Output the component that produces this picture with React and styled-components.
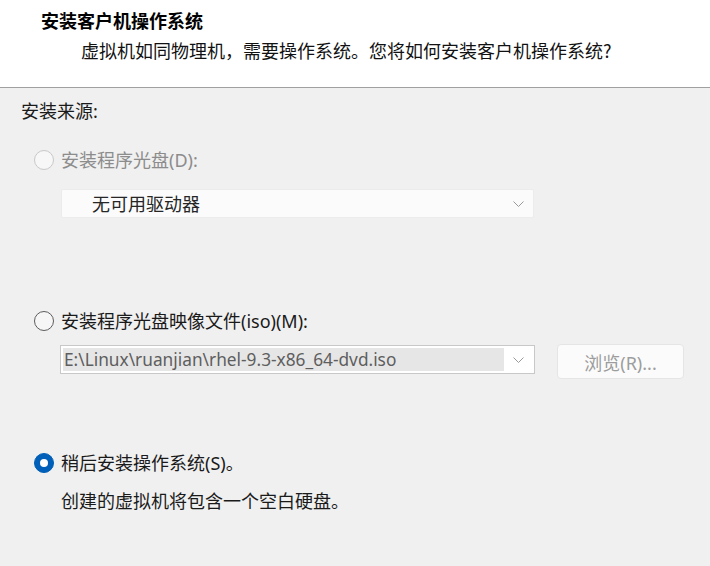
import React from "react";
import styled, { createGlobalStyle } from "styled-components";

const GlobalStyle = createGlobalStyle`
  html, body {
    margin: 0;
    padding: 0;
    background: #f0f0f0;
  }
  body {
    font-family: "Noto Sans", "Noto Sans CJK SC", sans-serif;
    font-size: 18px;
    color: #1a1a1a;
  }
`;

const Chevron = () => (
  <svg width="11" height="6" viewBox="0 0 11 6">
    <path d="M0.5 0.5 L5.5 5.5 L10.5 0.5" fill="none" stroke="#9a9a9a" strokeWidth="1" />
  </svg>
);

const App = () => {
  return (
    <>
      <GlobalStyle />
      <Window>
        <Header>
          <Title>安装客户机操作系统</Title>
          <Subtitle>虚拟机如同物理机，需要操作系统。您将如何安装客户机操作系统?</Subtitle>
        </Header>
        <Body>
          <SectionLabel>安装来源:</SectionLabel>

          <OptionRow $top={25}>
            <Radio $state="disabled" />
            <OptionLabel $disabled>安装程序光盘(D):</OptionLabel>
          </OptionRow>
          <Indent $top={17}>
            <DriveSelect>
              <DriveText>无可用驱动器</DriveText>
              <Chevron />
            </DriveSelect>
          </Indent>

          <OptionRow $top={91}>
            <Radio $state="off" />
            <OptionLabel>安装程序光盘映像文件(iso)(M):</OptionLabel>
          </OptionRow>
          <IsoRow>
            <IsoCombo>
              <IsoValue>E:\Linux\ruanjian\rhel-9.3-x86_64-dvd.iso</IsoValue>
              <ChevronSlot>
                <Chevron />
              </ChevronSlot>
            </IsoCombo>
            <BrowseButton disabled>浏览(R)...</BrowseButton>
          </IsoRow>

          <OptionRow $top={72}>
            <Radio $state="on" />
            <OptionLabel>稍后安装操作系统(S)。</OptionLabel>
          </OptionRow>
          <Description>创建的虚拟机将包含一个空白硬盘。</Description>
        </Body>
      </Window>
    </>
  );
};

const Window = styled.div`
  width: 710px;
  height: 566px;
  overflow: hidden;
  background: #f0f0f0;
`;

const Header = styled.div`
  background: #ffffff;
  height: 88px;
  box-sizing: border-box;
  padding: 8px 0 0 41px;
  border-bottom: 1px solid #a0a0a0;
`;

const Title = styled.div`
  font-family: "Noto Sans CJK SC", sans-serif;
  font-weight: 700;
  font-size: 18px;
  line-height: 24px;
  color: #000;
`;

const Subtitle = styled.div`
  font-family: "Noto Sans CJK SC", sans-serif;
  font-size: 18px;
  line-height: 24px;
  margin: 6px 0 0 40px;
  color: #111;
`;

const Body = styled.div`
  padding: 11px 0 0 21px;
  display: flex;
  flex-direction: column;
`;

const SectionLabel = styled.div`
  line-height: 24px;
  color: #1a1a1a;
`;

const OptionRow = styled.div`
  display: flex;
  align-items: center;
  gap: 7px;
  height: 24px;
  margin: ${(p) => p.$top}px 0 0 13px;
`;

const Radio = styled.span`
  box-sizing: border-box;
  width: 20px;
  height: 20px;
  border-radius: 50%;
  flex: none;
  border: 1px solid
    ${(p) => (p.$state === "disabled" ? "#c8c8c8" : p.$state === "on" ? "#005fb8" : "#5c5c5c")};
  background: ${(p) => (p.$state === "disabled" ? "#f7f7f7" : p.$state === "on" ? "#005fb8" : "#f6f6f6")};
  display: flex;
  align-items: center;
  justify-content: center;

  &::after {
    content: "";
    display: ${(p) => (p.$state === "on" ? "block" : "none")};
    width: 8px;
    height: 8px;
    border-radius: 50%;
    background: #ffffff;
  }
`;

const OptionLabel = styled.span`
  line-height: 24px;
  color: ${(p) => (p.$disabled ? "#8c8c8c" : "#1a1a1a")};
`;

const Indent = styled.div`
  margin: ${(p) => p.$top}px 0 0 40px;
`;

const DriveSelect = styled.div`
  box-sizing: border-box;
  width: 473px;
  height: 29px;
  background: #fbfbfb;
  border: 1px solid #ececec;
  border-radius: 2px;
  display: flex;
  align-items: center;
  justify-content: space-between;
  padding: 0 9px 0 30px;
`;

const DriveText = styled.span`
  color: #262626;
  line-height: 24px;
`;

const IsoRow = styled.div`
  display: flex;
  align-items: flex-start;
  gap: 22px;
  margin: 11px 0 0 39px;
`;

const IsoCombo = styled.div`
  box-sizing: border-box;
  width: 475px;
  height: 29px;
  margin-top: 1px;
  background: #ffffff;
  border: 1px solid #c8c8c8;
  display: flex;
  align-items: stretch;
  padding: 2px;
`;

const IsoValue = styled.div`
  flex: 1;
  background: #e6e6e6;
  color: #5e5e5e;
  font-size: 17.3px;
  line-height: 23px;
  padding-left: 1px;
  white-space: nowrap;
  overflow: hidden;
`;

const ChevronSlot = styled.div`
  width: 28px;
  display: flex;
  align-items: center;
  justify-content: center;
`;

const BrowseButton = styled.button`
  box-sizing: border-box;
  width: 127px;
  height: 35px;
  background: #fbfbfb;
  border: 1px solid #e5e5e5;
  border-radius: 4px;
  color: #9d9d9d;
  font-family: "Noto Sans", "Noto Sans CJK SC", sans-serif;
  font-size: 18px;
  padding: 0;
`;

const Description = styled.div`
  margin: 14px 0 0 40px;
  line-height: 24px;
  color: #1a1a1a;
`;

export default App;
